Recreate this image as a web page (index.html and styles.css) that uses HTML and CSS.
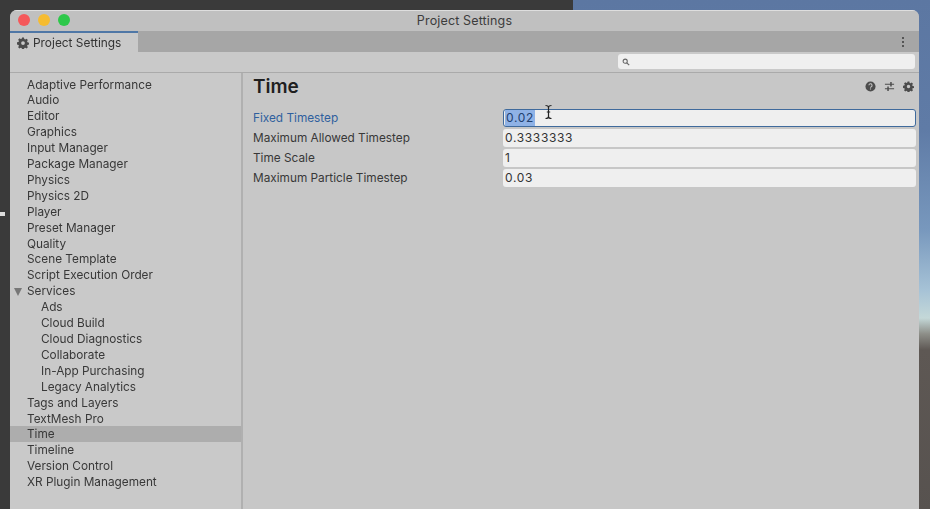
FILE: index.html
```html
<!DOCTYPE html>
<html lang="en">
<head>
<meta charset="utf-8">
<title>Project Settings</title>
<link rel="stylesheet" href="styles.css">
</head>
<body>
<div class="desktop">
  <div class="bg-dark"></div>
  <div class="bg-right"></div>
</div>
<div class="cursor-mark"></div>
<main class="window">
  <header class="titlebar">
    <div class="lights"><span class="light red"></span><span class="light yellow"></span><span class="light green"></span></div>
    <div class="title">Project Settings</div>
  </header>
  <div class="tabbar">
    <div class="tab">
      <svg class="tab-gear" viewBox="0 0 16 16"><use href="#gear"/></svg>
      <span>Project Settings</span>
    </div>
    <div class="kebab"><i></i><i></i><i></i></div>
  </div>
  <div class="searchbar">
    <div class="search">
      <svg class="search-icon" viewBox="0 0 10 10"><circle cx="4" cy="4" r="2.6" fill="none" stroke="#666" stroke-width="1.3"/><path d="M6 6l3 3" stroke="#666" stroke-width="1.5"/></svg>
    </div>
  </div>
  <div class="body">
    <nav class="sidebar">
      <div class="item">Adaptive Performance</div>
      <div class="item">Audio</div>
      <div class="item">Editor</div>
      <div class="item">Graphics</div>
      <div class="item">Input Manager</div>
      <div class="item">Package Manager</div>
      <div class="item">Physics</div>
      <div class="item">Physics 2D</div>
      <div class="item">Player</div>
      <div class="item">Preset Manager</div>
      <div class="item">Quality</div>
      <div class="item">Scene Template</div>
      <div class="item">Script Execution Order</div>
      <div class="item parent"><span class="triangle"></span>Services</div>
      <div class="item child">Ads</div>
      <div class="item child">Cloud Build</div>
      <div class="item child">Cloud Diagnostics</div>
      <div class="item child">Collaborate</div>
      <div class="item child">In-App Purchasing</div>
      <div class="item child">Legacy Analytics</div>
      <div class="item">Tags and Layers</div>
      <div class="item">TextMesh Pro</div>
      <div class="item selected">Time</div>
      <div class="item">Timeline</div>
      <div class="item">Version Control</div>
      <div class="item">XR Plugin Management</div>
    </nav>
    <section class="content">
      <div class="content-head">
        <h1>Time</h1>
        <div class="tools">
          <svg class="tool" viewBox="0 0 12 12"><circle cx="6" cy="6" r="5.500" fill="#4c4c4c"/><path d="M4.300 4.700a1.700 1.700 0 1 1 2.500 1.500c-.6.3-.8.6-.8 1.100" fill="none" stroke="#c4c4c4" stroke-width="1.200"/><rect x="5.400" y="8.100" width="1.200" height="1.200" fill="#c4c4c4"/></svg>
          <svg class="tool" viewBox="0 0 12 12"><path d="M1 3.500h10M1 8.500h10" stroke="#4c4c4c" stroke-width="1.200"/><path d="M7.600 1v5M4.400 6v5" stroke="#4c4c4c" stroke-width="1.600"/></svg>
          <svg class="tool" viewBox="0 0 16 16"><use href="#gear"/></svg>
        </div>
      </div>
      <div class="rows">
        <div class="row active"><label>Fixed Timestep</label><div class="field focus"><span class="sel">0.02</span></div></div>
        <div class="row"><label>Maximum Allowed Timestep</label><div class="field">0.3333333</div></div>
        <div class="row"><label>Time Scale</label><div class="field">1</div></div>
        <div class="row"><label>Maximum Particle Timestep</label><div class="field">0.03</div></div>
      </div>
      <svg class="ibeam" viewBox="0 0 9 16"><path d="M1.500 1.500c1.500 0 3 .5 3 2v9c0 1.500-1.500 2-3 2M7.500 1.500c-1.500 0-3 .5-3 2v9c0 1.500 1.500 2 3 2M2.800 8h3.400" fill="none" stroke="#222" stroke-width="1.200"/></svg>
    </section>
  </div>
</main>
<svg class="defs" width="0" height="0">
  <defs>
    <path id="gear" fill="#4c4c4c" fill-rule="evenodd" d="M6.700 0.800h2.600l.4 2 1.300.6 1.700-1.100 1.800 1.800-1.100 1.700.6 1.300 2 .4v2.600l-2 .4-.6 1.300 1.100 1.700-1.800 1.800-1.700-1.100-1.300.6-.4 2H6.700l-.4-2-1.300-.6-1.700 1.100-1.800-1.800 1.100-1.700-.6-1.300-2-.4V6.900l2-.4.6-1.300-1.100-1.700 1.800-1.800 1.700 1.100 1.300-.6zM8 5.500a2.500 2.500 0 1 0 0 5 2.500 2.500 0 0 0 0-5z"/>
  </defs>
</svg>
</body>
</html>
```
FILE: styles.css
```css
* { box-sizing: border-box; }
html, body { margin: 0; height: 509px; overflow: hidden; }
body { position: relative; background: #3b3b3b; font-family: Inter, "Noto Sans", "Liberation Sans", sans-serif; color: #2b2b2b; }

.desktop { position: absolute; inset: 0; display: flex; }
.bg-dark { width: 573px; background: #3a3a3a; }
.bg-right { flex: 1; background: linear-gradient(180deg, #5c77a2 0, #5f7ba6 130px, #7898bd 230px, #a6c2d6 290px, #c4d8d8 318px, #8d8e88 334px, #5e5854 350px, #57524f 509px); }
.cursor-mark { position: absolute; left: 0; top: 212px; width: 5px; height: 4px; background: #dcdcdc; filter: blur(0.500px); }

.window { position: absolute; left: 10px; top: 10px; width: 909px; height: 499px; background: #c6c6c6; border-radius: 7px 7px 0 0; display: flex; flex-direction: column; overflow: hidden; filter: blur(0.350px); }

.titlebar { height: 21px; flex: none; background: #c0c0c0; box-shadow: inset 0 1px 0 #dedede; position: relative; display: flex; align-items: center; justify-content: center; }
.title { font-size: 12.500px; color: #3c3c3c; letter-spacing: 0.150px; }
.lights { position: absolute; left: 8px; top: 4px; display: flex; gap: 8px; }
.light { width: 12px; height: 12px; border-radius: 50%; }
.red { background: #f5585a; }
.yellow { background: #f6bc31; }
.green { background: #2dc84a; }

.tabbar { height: 21px; flex: none; background: #a6a6a6; display: flex; justify-content: space-between; align-items: center; padding-right: 15px; }
.tab { width: 128px; height: 21px; background: #c9c9c9; border-top: 2px solid #4f77a6; display: flex; align-items: center; gap: 4px; padding-left: 7px; font-size: 11.900px; color: #333; }
.tab-gear { width: 12px; height: 12px; }
.kebab { display: flex; flex-direction: column; gap: 2px; }
.kebab i { display: block; width: 2px; height: 2px; background: #555; }

.searchbar { height: 21px; flex: none; background: #c9c9c9; border-bottom: 1px solid #aaa; display: flex; justify-content: flex-end; align-items: flex-start; padding: 2px 4px 0 0; }
.search { width: 297px; height: 15px; background: #efefef; border-radius: 3px; display: flex; align-items: center; padding-left: 4px; }
.search-icon { width: 8px; height: 8px; }

.body { flex: 1; display: flex; min-height: 0; }
.sidebar { width: 233px; flex: none; border-right: 2px solid #b0b0b0; padding-top: 3.500px; background: #c9c9c9; }
.item { height: 15.920px; line-height: 16px; font-size: 11.800px; padding-left: 17px; color: #383838; position: relative; }
.child { padding-left: 31px; }
.selected { background: #adadad; }
.triangle { position: absolute; left: 4px; top: 5px; width: 0; height: 0; border-left: 4.500px solid transparent; border-right: 4.500px solid transparent; border-top: 8px solid #777; }

.content { flex: 1; position: relative; padding: 0 3px 0 10px; background: #c7c7c7; }
.content-head { height: 27px; display: flex; justify-content: space-between; align-items: center; }
h1 { margin: 0; font-size: 19px; font-weight: 600; color: #1f1f1f; }
.tools { display: flex; gap: 8px; align-items: center; padding-right: 2px; }
.tool { width: 11px; height: 11px; display: block; }

.rows { display: flex; flex-direction: column; gap: 2px; padding-top: 9px; }
.row { display: flex; align-items: center; height: 18px; font-size: 11.800px; color: #383838; }
.row label { width: 250px; flex: none; }
.active label { color: #2f5f9e; }
.field { flex: 1; height: 18px; background: #efefef; border-radius: 3px; padding-left: 2px; line-height: 18px; font-size: 12px; letter-spacing: 0.650px; color: #333; }
.focus { border: 1px solid #3f6a9c; line-height: 16px; padding-left: 1px; }
.sel { background: #8fb2e6; color: #22406e; display: inline-block; padding: 0 1px; }
.ibeam { position: absolute; left: 301px; top: 31px; width: 9px; height: 16px; }
.defs { position: absolute; }
```
